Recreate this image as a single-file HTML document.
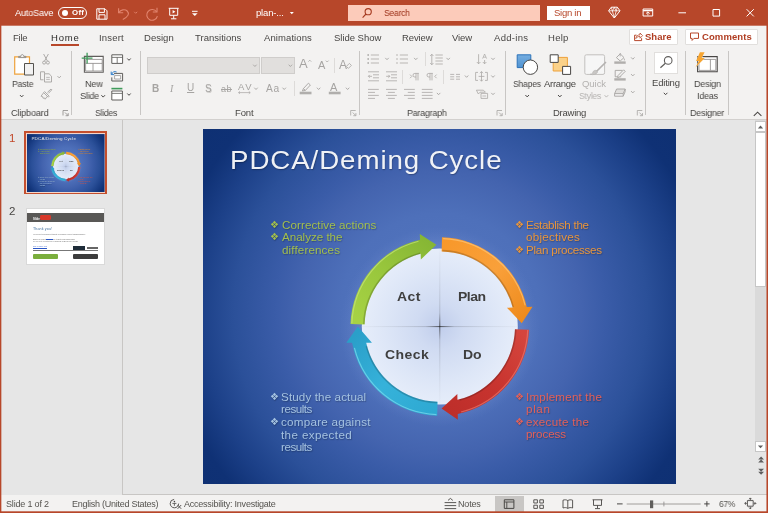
<!DOCTYPE html>
<html lang="en">
<head>
<meta charset="utf-8">
<title>plan-do-check-act - PowerPoint</title>
<style>
*{box-sizing:border-box;margin:0;padding:0}
html,body{width:768px;height:513px;overflow:hidden;background:#e6e6e6}
body{font-family:"Liberation Sans",sans-serif;font-size:9.5px;color:#484644;position:relative}
.a{position:absolute}
.t{position:absolute;white-space:nowrap;line-height:12px;will-change:transform}
.sl{text-shadow:0.6px 0.8px 1.2px rgba(0,0,0,0.28)}
#titlebar{left:0;top:0;width:768px;height:25px;background:#b7472a}
#tabs{left:0;top:25px;width:768px;height:24px;background:#f3f2f1;border-top:1px solid #c97a66}
#ribbon{left:0;top:49px;width:768px;height:71px;background:#f3f2f1;border-bottom:1px solid #d2d0ce}
#work{left:0;top:120px;width:768px;height:375px;background:#e6e6e6}
#status{left:0;top:495px;width:768px;height:18px;background:#f3f2f1}
#bl{left:0;top:25px;width:2px;height:488px;background:linear-gradient(90deg,#b7472a 0,#b7472a 1px,rgba(183,71,42,0.35) 1px,rgba(183,71,42,0.35) 2px)}
#br{left:766px;top:25px;width:2px;height:488px;background:linear-gradient(90deg,rgba(183,71,42,0.55) 0,rgba(183,71,42,0.55) 1px,#b7472a 1px,#b7472a 2px)}
#bb{left:0;top:511px;width:768px;height:2px;background:linear-gradient(180deg,rgba(183,71,42,0.7) 0,rgba(183,71,42,0.7) 1px,#b7472a 1px,#b7472a 2px)}
.sep{position:absolute;width:1px}
</style>
</head>
<body>
<div class="a" id="titlebar"></div>
<div class="a" id="tabs"></div>
<div class="a" id="ribbon"></div>
<div class="a" id="work"></div>
<div class="a" id="status"></div>

<!-- TITLEBAR -->
<span class="t" style="left:15.4px;top:7.0px;font-size:9.5px;letter-spacing:-0.25px;color:#fff;transform:scaleX(0.9737300505567069);transform-origin:0 50%;">AutoSave</span>
<div class="a" style="left:58.3px;top:6.7px;width:28.7px;height:12.2px;border:1px solid #fff;border-radius:6.1px"></div>
<div class="a" style="left:62.4px;top:10px;width:5.6px;height:5.6px;border-radius:3px;background:#fff"></div>
<span class="t" style="left:71.5px;top:6.9px;font-size:7.8px;letter-spacing:0.34px;color:#fff;font-weight:700;">Off</span>
<span class="t" style="left:256.4px;top:7.0px;font-size:9.5px;letter-spacing:-0.16px;color:#fff;">plan-...</span>
<div class="a" style="left:347.8px;top:5px;width:192.2px;height:16.3px;background:#fccbba"></div>
<span class="t" style="left:383.5px;top:7.0px;font-size:9.5px;letter-spacing:-0.25px;color:#9a2f17;transform:scaleX(0.9021817856827697);transform-origin:0 50%;">Search</span>
<div class="a" style="left:546.7px;top:6.2px;width:43px;height:13.8px;background:#fff"></div>
<span class="t" style="left:554.4px;top:7.0px;font-size:9.5px;letter-spacing:-0.27px;color:#b7472a;">Sign in</span>
<svg class="a" style="left:0;top:0" width="768" height="25" viewBox="0 0 768 25" fill="none" stroke="#fff" stroke-width="1"><path d="M96.8 8.8h8.2l2 2v8.4h-10.2z"/><path d="M99 8.8v3.6h5.4v-3.6"/><path d="M99 19.2v-4.4h6v4.4"/><g stroke="#e2856f" stroke-width="1.1"><path d="M118.6 8.2v4.6h4.6"/><path d="M118.8 12.6c2-3 6-3.8 8.4-1.6c2.6 2.6 1.2 5.6-4.4 8.4"/><path d="M134.2 11.8l1.5 1.5l1.5-1.5" stroke-width="0.9"/><path d="M157 7.8v4.2h-4.2"/><path d="M156.6 11.8a5.4 5.4 0 1 0 0.8 4.4"/></g><path d="M168.7 8.3h10M169.7 8.3v7h8v-7M173.7 15.3v3.4M171 18.8h5.4"/><path d="M172.6 10l2.8 1.8l-2.8 1.8z" fill="#fff" stroke="none"/><path d="M192 11.3h5.6"/><path d="M192 13.2l2.8 2.8l2.8-2.8z" fill="#fff" stroke="none"/><path d="M289.8 12l2 2.2l2-2.2z" fill="#fff" stroke="none"/><g stroke="#a5391f" stroke-width="1.1"><circle cx="368.2" cy="11.7" r="3.1"/><path d="M366 14l-3.4 3.6"/></g><path d="M611.3 7.2h6l2.7 3.6l-5.7 7.2l-5.7-7.2z"/><path d="M608.8 10.8h11M611.3 7.2l3 10.6l3-10.6M612.6 10.8l1.7-3.6l1.7 3.6" stroke-width="0.8"/><path d="M643.1 9h9.6v7h-9.6z"/><path d="M643.1 10.6h9.6" stroke-width="1.4"/><path d="M646 13.6l1.9-1.7l1.9 1.7M647.9 12v3.4" stroke-width="0.9"/><path d="M678.4 12.8h7.6"/><path d="M713 9.5h6.6v6.6h-6.6z"/><path d="M746.6 9.2l7.2 7.2M753.8 9.2l-7.2 7.2"/></svg>
<!-- TABS -->
<span class="t" style="left:13.1px;top:32.2px;font-size:9.5px;letter-spacing:-0.25px;color:#484644;transform:scaleX(0.9688647397282288);transform-origin:0 50%;">File</span>
<span class="t" style="left:51.1px;top:32.2px;font-size:9.5px;letter-spacing:0.80px;color:#2b2a29;">Home</span>
<span class="t" style="left:98.9px;top:32.2px;font-size:9.5px;letter-spacing:0.18px;color:#484644;">Insert</span>
<span class="t" style="left:144.1px;top:32.2px;font-size:9.5px;letter-spacing:0.03px;color:#484644;">Design</span>
<span class="t" style="left:195.2px;top:32.2px;font-size:9.5px;letter-spacing:0.02px;color:#484644;">Transitions</span>
<span class="t" style="left:263.7px;top:32.2px;font-size:9.5px;letter-spacing:0.09px;color:#484644;">Animations</span>
<span class="t" style="left:334.1px;top:32.2px;font-size:9.5px;letter-spacing:-0.03px;color:#484644;">Slide Show</span>
<span class="t" style="left:401.9px;top:32.2px;font-size:9.5px;letter-spacing:-0.10px;color:#484644;">Review</span>
<span class="t" style="left:452.4px;top:32.2px;font-size:9.5px;letter-spacing:-0.09px;color:#484644;">View</span>
<span class="t" style="left:493.7px;top:32.2px;font-size:9.5px;letter-spacing:0.30px;color:#484644;">Add-ins</span>
<span class="t" style="left:548.2px;top:32.2px;font-size:9.5px;letter-spacing:0.27px;color:#484644;">Help</span>
<div class="a" style="left:51.3px;top:44px;width:27.4px;height:2px;background:#b7472a"></div>
<div class="a" style="left:629px;top:28.7px;width:48.7px;height:16.1px;background:#fff;border:1px solid #e1dfdd;border-radius:1px"></div>
<div class="a" style="left:685px;top:28.7px;width:72.7px;height:16.1px;background:#fff;border:1px solid #e1dfdd;border-radius:1px"></div>
<span class="t" style="left:645.1px;top:30.8px;font-size:9.5px;letter-spacing:0.01px;color:#b03d22;font-weight:700;">Share</span>
<span class="t" style="left:701.8px;top:30.8px;font-size:9.5px;letter-spacing:0.09px;color:#b03d22;font-weight:700;">Comments</span>
<svg class="a" style="left:0;top:25px" width="768" height="24" viewBox="0 25 768 24" fill="none" stroke="#b7472a" stroke-width="1"><path d="M636.6 35.2h-2v5.4h7v-2.4"/><path d="M635.8 38.6c0.4-2.6 2-3.8 4.2-3.8v-1.8l2.6 2.6l-2.6 2.6v-1.8c-1.8 0-3 0.6-4.2 2.2z" stroke-width="0.8"/><path d="M690.5 33h8v5.4h-4.6l-1.8 2v-2h-1.6z"/></svg>
<!-- RIBBON -->
<div class="sep" style="left:71px;top:51.3px;height:64.2px;background:#c8c6c4"></div>
<div class="sep" style="left:140px;top:51.3px;height:64.2px;background:#c8c6c4"></div>
<div class="sep" style="left:359px;top:51.3px;height:64.2px;background:#c8c6c4"></div>
<div class="sep" style="left:505px;top:51.3px;height:64.2px;background:#c8c6c4"></div>
<div class="sep" style="left:645px;top:51.3px;height:64.2px;background:#c8c6c4"></div>
<div class="sep" style="left:685px;top:51.3px;height:64.2px;background:#c8c6c4"></div>
<div class="sep" style="left:728px;top:51.3px;height:64.2px;background:#c8c6c4"></div>
<div class="sep" style="left:334px;top:58.0px;height:14.7px;background:#dddbd9"></div>
<div class="sep" style="left:294px;top:81.3px;height:15.0px;background:#dddbd9"></div>
<div class="sep" style="left:425px;top:52.0px;height:14.3px;background:#dddbd9"></div>
<div class="sep" style="left:402px;top:69.7px;height:14.6px;background:#dddbd9"></div>
<div class="sep" style="left:443px;top:69.7px;height:14.6px;background:#dddbd9"></div>
<span class="t" style="left:11.5px;top:78.3px;font-size:9.5px;letter-spacing:-0.25px;color:#484644;transform:scaleX(0.9253894200199396);transform-origin:0 50%;">Paste</span>
<span class="t" style="left:11.1px;top:107.4px;font-size:9.5px;letter-spacing:-0.25px;color:#484644;transform:scaleX(0.9754025659283688);transform-origin:0 50%;">Clipboard</span>
<span class="t" style="left:84.5px;top:77.8px;font-size:9.5px;letter-spacing:-0.25px;color:#484644;transform:scaleX(0.9617184238183678);transform-origin:0 50%;">New</span>
<span class="t" style="left:79.5px;top:90.0px;font-size:9.5px;letter-spacing:-0.25px;color:#484644;transform:scaleX(0.9639323700045184);transform-origin:0 50%;">Slide</span>
<span class="t" style="left:95.3px;top:107.4px;font-size:9.5px;letter-spacing:-0.25px;color:#484644;transform:scaleX(0.9112302340017421);transform-origin:0 50%;">Slides</span>
<span class="t" style="left:234.9px;top:107.4px;font-size:9.5px;letter-spacing:-0.12px;color:#484644;">Font</span>
<span class="t" style="left:406.7px;top:107.4px;font-size:9.5px;letter-spacing:-0.25px;color:#484644;transform:scaleX(0.9411832483632958);transform-origin:0 50%;">Paragraph</span>
<span class="t" style="left:513.0px;top:78.3px;font-size:9.5px;letter-spacing:-0.25px;color:#484644;transform:scaleX(0.9051157898706648);transform-origin:0 50%;">Shapes</span>
<span class="t" style="left:544.2px;top:78.3px;font-size:9.5px;letter-spacing:-0.29px;color:#484644;">Arrange</span>
<span class="t" style="left:553.2px;top:107.4px;font-size:9.5px;letter-spacing:-0.25px;color:#484644;">Drawing</span>
<span class="t" style="left:582.4px;top:77.8px;font-size:9.5px;letter-spacing:-0.04px;color:#b4b2b0;">Quick</span>
<span class="t" style="left:579.2px;top:90.0px;font-size:9.5px;letter-spacing:-0.25px;color:#b4b2b0;transform:scaleX(0.9071556292294148);transform-origin:0 50%;">Styles</span>
<span class="t" style="left:651.6px;top:77.3px;font-size:9.5px;letter-spacing:-0.18px;color:#484644;">Editing</span>
<span class="t" style="left:693.9px;top:78.3px;font-size:9.5px;letter-spacing:-0.25px;color:#484644;transform:scaleX(0.9565252381253485);transform-origin:0 50%;">Design</span>
<span class="t" style="left:696.5px;top:89.7px;font-size:9.5px;letter-spacing:-0.25px;color:#484644;transform:scaleX(0.9478753706803634);transform-origin:0 50%;">Ideas</span>
<span class="t" style="left:690.2px;top:107.3px;font-size:9.5px;letter-spacing:-0.25px;color:#484644;transform:scaleX(0.9479387602738389);transform-origin:0 50%;">Designer</span>
<div class="a" style="left:147px;top:57px;width:113px;height:17px;background:#e1dfdd;border:1px solid #cfcdcb"></div>
<div class="a" style="left:261px;top:57px;width:34px;height:17px;background:#e1dfdd;border:1px solid #cfcdcb"></div>
<div class="a" style="left:654px;top:52px;width:24px;height:22px;background:#fff;border:1px solid #e1dfdd"></div>
<span class="t" style="left:152.1px;top:82.7px;font-size:10px;letter-spacing:0.00px;color:#a6a4a2;font-weight:700;">B</span>
<span class="t" style="left:170.4px;top:82.7px;font-size:10px;letter-spacing:0.00px;color:#a6a4a2;font-style:italic;font-family:'Liberation Serif',serif;">I</span>
<span class="t" style="left:186.8px;top:82.3px;font-size:10px;letter-spacing:0.00px;color:#a6a4a2;text-decoration:underline;">U</span>
<span class="t" style="left:204.9px;top:82.7px;font-size:10px;letter-spacing:0.00px;color:#a6a4a2;text-shadow:0.6px 0.6px 0 #cfcdcb;">S</span>
<span class="t" style="left:221.1px;top:83.0px;font-size:9px;letter-spacing:0.47px;color:#a6a4a2;text-decoration:line-through;">ab</span>
<span class="t" style="left:237.6px;top:81.0px;font-size:9.5px;letter-spacing:1.57px;color:#a6a4a2;">AV</span>
<span class="t" style="left:266.2px;top:82.8px;font-size:10.2px;letter-spacing:0.65px;color:#a6a4a2;">Aa</span>
<span class="t" style="left:298.9px;top:58.2px;font-size:13px;letter-spacing:0.00px;color:#a6a4a2;">A</span>
<span class="t" style="left:317.8px;top:59.0px;font-size:11px;letter-spacing:0.00px;color:#a6a4a2;">A</span>
<span class="t" style="left:339.0px;top:58.6px;font-size:12px;letter-spacing:0.00px;color:#a6a4a2;">A</span>
<span class="t" style="left:329.5px;top:80.6px;font-size:11px;letter-spacing:0.00px;color:#a6a4a2;">A</span>
<svg class="a" style="left:0;top:49px" width="768" height="71" viewBox="0 49 768 71" fill="none" stroke="#605e5c" stroke-width="1"><path d="M14.7 56.8h14.8v17.4h-14.8z" fill="#fff" stroke="#eea23c" stroke-width="1.2"/><path d="M18.6 57.6v-1.2h2.2c0-2.4 3-2.4 3 0h2.2v1.2z" fill="#f3f2f1" stroke="#8a8886" stroke-width="0.9"/><path d="M24.5 63.5h9v11.5h-9z" fill="#f2f2f2" stroke="#55534f" stroke-width="1"/><path d="M20.0 95.1l1.7 1.8l1.7 -1.8" stroke="#484644" stroke-width="1" fill="none"/><g stroke="#a6a4a2" stroke-width="0.9"><path d="M43.6 54l3.8 7M48.4 54l-3.8 7"/><circle cx="44.1" cy="62.6" r="1.5"/><circle cx="47.9" cy="62.6" r="1.5"/></g><g stroke="#a6a4a2" stroke-width="0.9"><path d="M44.5 73.8v-2h-4v8h3"/><path d="M44.5 73.8h4.6l2.4 2.4v5.8h-7z" fill="#f3f2f1"/><path d="M46.2 77.4h3.6M46.2 79.4h3.6" stroke-width="0.7"/></g><path d="M57.5 76.1l1.7 1.8l1.7 -1.8" stroke="#a6a4a2" stroke-width="0.9" fill="none"/><g stroke="#a6a4a2" stroke-width="0.9"><path d="M47.4 92.4l3.6-3.4l0.8 0.8l-3.4 3.6"/><path d="M44.6 91.6l4.6 4.6l-1 1l-4.6-4.6z"/><path d="M43.6 92.8l-2.6 3.4l1.6 0.4l0.4 1.6l1.6-0.2l0.6 1.2l2-2.8"/></g><path d="M68.0 110.5h-5.0v5" stroke="#8a8886" stroke-width="0.8" fill="none"/><path d="M65.0 112.5l3 3M68.2 113.1v2.6h-2.6" stroke="#8a8886" stroke-width="0.8" fill="none"/><path d="M84.4 56.4h18.8v15.8h-18.8z" fill="#fff" stroke="#605e5c" stroke-width="1.1"/><path d="M85.6 59.4h16.6v11.6h-16.6z" stroke="#8a8886" stroke-width="0.8"/><path d="M85.6 63.4h16.6M93 63.4v7.6" stroke="#8a8886" stroke-width="0.8"/><path d="M81.7 58.2h10.8M87.1 52.8v10.8" stroke="#3f9b5b" stroke-width="1.3"/><path d="M101.4 95.2l1.8 1.9l1.8 -1.9" stroke="#484644" stroke-width="1" fill="none"/><path d="M111.8 54.8h10.8v8.6h-10.8z" fill="#fff" stroke="#605e5c"/><path d="M112 57.4h10.4M117.2 57.4v5.8" stroke="#605e5c" stroke-width="0.8"/><path d="M127.3 58.5l1.7 1.8l1.7 -1.8" stroke="#484644" stroke-width="1" fill="none"/><path d="M114 73.4h8.6v7.6h-10.8v-3.6" fill="none" stroke="#605e5c"/><path d="M114.6 75.6h6v3.4h-6z" fill="#fff" stroke="#8a8886" stroke-width="0.7"/><path d="M111.6 74.4c0.6-2.4 3-3.4 5-2.4M111.2 71.6v3h3" stroke="#2e7cc8" stroke-width="1"/><path d="M111.4 88.6h11" stroke="#3f9b5b" stroke-width="1.6"/><path d="M111.8 91h10.6v9h-10.6z" fill="#fff" stroke="#605e5c"/><path d="M112 93.4h10.2" stroke="#605e5c" stroke-width="0.8"/><path d="M127.3 93.5l1.7 1.8l1.7 -1.8" stroke="#484644" stroke-width="1" fill="none"/><path d="M253.2 64.7l1.7 1.8l1.7 -1.8" stroke="#a6a4a2" stroke-width="0.9" fill="none"/><path d="M288.7 64.7l1.7 1.8l1.7 -1.8" stroke="#a6a4a2" stroke-width="0.9" fill="none"/><path d="M308.4 61.6l1.4-1.4l1.4 1.4" stroke="#a6a4a2" stroke-width="0.8"/><path d="M325.8 60.6l1.4 1.4l1.4-1.4" stroke="#a6a4a2" stroke-width="0.8"/><path d="M346.4 66.4l3-3l2 2l-3 3z" fill="#f3f2f1" stroke="#a6a4a2" stroke-width="0.8"/><path d="M238.6 92.6h11.6M240 91.4l-1.4 1.2l1.4 1.2M248.8 91.4l1.4 1.2l-1.4 1.2" stroke="#a6a4a2" stroke-width="0.7"/><path d="M254.3 87.7l1.7 1.8l1.7 -1.8" stroke="#a6a4a2" stroke-width="0.9" fill="none"/><path d="M282.5 87.7l1.7 1.8l1.7 -1.8" stroke="#a6a4a2" stroke-width="0.9" fill="none"/><path d="M303.4 88.6l5-5.4l2 1.8l-5 5.4z M303.4 88.6l-1 2.4l3-0.6" stroke="#a6a4a2" stroke-width="0.9"/><path d="M299.7 93h11.8" stroke="#b0aeac" stroke-width="2.6"/><path d="M316.9 87.7l1.7 1.8l1.7 -1.8" stroke="#a6a4a2" stroke-width="0.9" fill="none"/><path d="M328.8 93h11.8" stroke="#b0aeac" stroke-width="2.6"/><path d="M345.9 87.7l1.7 1.8l1.7 -1.8" stroke="#a6a4a2" stroke-width="0.9" fill="none"/><path d="M355.7 110.5h-5.0v5" stroke="#a6a4a2" stroke-width="0.8" fill="none"/><path d="M352.7 112.5l3 3M355.9 113.1v2.6h-2.6" stroke="#a6a4a2" stroke-width="0.8" fill="none"/><g stroke="#a9a7a5" stroke-width="0.8"><path d="M367.4 55h1.6" stroke-width="1.6"/><path d="M370.8 55h8.2"/><path d="M367.4 59h1.6" stroke-width="1.6"/><path d="M370.8 59h8.2"/><path d="M367.4 63h1.6" stroke-width="1.6"/><path d="M370.8 63h8.2"/><path d="M397 54v2" stroke-width="0.8"/><path d="M399.8 55h8.2"/><path d="M397 58v2" stroke-width="0.8"/><path d="M399.8 59h8.2"/><path d="M397 62v2" stroke-width="0.8"/><path d="M399.8 63h8.2"/><path d="M435.4 55h7.4"/><path d="M435.4 58h7.4"/><path d="M435.4 61h7.4"/><path d="M435.4 64h7.4"/><path d="M431.8 54.4v10.2M430.2 56l1.6-1.8l1.6 1.8M430.2 63l1.6 1.8l1.6-1.8" stroke-width="0.8"/><path d="M368 71.8h11M368 80.8h11M373 74.8h6M373 77.8h6"/><path d="M386 71.8h11M386 80.8h11M391 74.8h6M391 77.8h6"/><path d="M372 76.3h-3.6M369.8 74.9l-1.4 1.4l1.4 1.4" stroke-width="0.8"/><path d="M386.2 76.3h3.6M388.4 74.9l1.4 1.4l-1.4 1.4" stroke-width="0.8"/><path d="M410 74.6l1.8 1.8l-1.8 1.8" stroke-width="0.8"/><path d="M416 73.4v7M418 73.4v7M418.8 73.4h-4a1.8 1.8 0 0 0 0 3.6h1.2" /><path d="M436.6 74.6l-1.8 1.8l1.8 1.8" stroke-width="0.8"/><path d="M430 73.4v7M432 73.4v7M432.8 73.4h-4a1.8 1.8 0 0 0 0 3.6h1.2" /><path d="M450.2 74.4h4M456 74.4h4"/><path d="M450.2 76.8h4M456 76.8h4"/><path d="M450.2 79.2h4M456 79.2h4"/><path d="M368.0 89.4h10.8"/><path d="M368.0 92.4h7"/><path d="M368.0 95.4h10.8"/><path d="M368.0 98.4h7"/><path d="M386.0 89.4h10.8"/><path d="M387.9 92.4h7"/><path d="M386.0 95.4h10.8"/><path d="M387.9 98.4h7"/><path d="M404.0 89.4h10.8"/><path d="M407.8 92.4h7"/><path d="M404.0 95.4h10.8"/><path d="M407.8 98.4h7"/><path d="M421.8 89.4h10.8"/><path d="M421.8 92.4h10.8"/><path d="M421.8 95.4h10.8"/><path d="M421.8 98.4h10.8"/><path d="M478.6 54.2v9.6M476.8 62l1.8 1.8l1.8-1.8M484.6 60v3.8M482.8 62l1.8 1.8l1.8-1.8" stroke-width="0.8"/><path d="M482.6 58.6l2-4.6l2 4.6M483.3 57.2h2.6" stroke-width="0.7"/><path d="M478 72.4h-2.4v8h2.4M485 72.4h2.4v8h-2.4" /><path d="M481.5 71.6v9.6M480 73.2l1.5-1.6l1.5 1.6M480 79.6l1.5 1.6l1.5-1.6M478.6 76.4h5.8" stroke-width="0.8"/><path d="M476.4 90.2h7l2 2h-5.4l-1.6 1.8z" stroke-width="0.8"/><path d="M481 93.4h6.6v5h-6.6z" /><path d="M482.4 96h3.8" stroke-width="0.7"/></g><path d="M385.3 57.9l1.7 1.8l1.7 -1.8" stroke="#a6a4a2" stroke-width="0.9" fill="none"/><path d="M414.1 57.9l1.7 1.8l1.7 -1.8" stroke="#a6a4a2" stroke-width="0.9" fill="none"/><path d="M446.5 57.9l1.7 1.8l1.7 -1.8" stroke="#a6a4a2" stroke-width="0.9" fill="none"/><path d="M464.9 75.5l1.7 1.8l1.7 -1.8" stroke="#a6a4a2" stroke-width="0.9" fill="none"/><path d="M436.9 92.9l1.7 1.8l1.7 -1.8" stroke="#a6a4a2" stroke-width="0.9" fill="none"/><path d="M491.3 57.9l1.7 1.8l1.7 -1.8" stroke="#a6a4a2" stroke-width="0.9" fill="none"/><path d="M491.3 75.5l1.7 1.8l1.7 -1.8" stroke="#a6a4a2" stroke-width="0.9" fill="none"/><path d="M491.3 92.9l1.7 1.8l1.7 -1.8" stroke="#a6a4a2" stroke-width="0.9" fill="none"/><path d="M502.0 110.5h-5.0v5" stroke="#a6a4a2" stroke-width="0.8" fill="none"/><path d="M499.0 112.5l3 3M502.2 113.1v2.6h-2.6" stroke="#a6a4a2" stroke-width="0.8" fill="none"/><defs><linearGradient id="gsh" x1="0" y1="0" x2="0" y2="1"><stop offset="0" stop-color="#76aee0"/><stop offset="1" stop-color="#4f93d2"/></linearGradient></defs><path d="M517.2 54.8h13.6v12.8h-13.6z" fill="url(#gsh)" stroke="#2b72b9" stroke-width="1"/><circle cx="530.4" cy="67.2" r="7.2" fill="#fff" stroke="#484644" stroke-width="1"/><path d="M525.4 95.0l1.8 1.9l1.8 -1.9" stroke="#484644" stroke-width="1" fill="none"/><path d="M553.2 57.4h14.2v13.6h-14.2z" fill="#fbd28a" stroke="#eea23c" stroke-width="1"/><path d="M550.2 54.8h8v7.6h-8z" fill="#fff" stroke="#484644" stroke-width="1"/><path d="M562.6 66.4h8v8h-8z" fill="#fff" stroke="#484644" stroke-width="1"/><path d="M558.0 95.0l1.8 1.9l1.8 -1.9" stroke="#484644" stroke-width="1" fill="none"/><rect x="584.8" y="54.8" width="19.8" height="19.6" rx="1.6" fill="#f6f6f6" stroke="#c2c0be" stroke-width="1"/><path d="M606 62l-9.4 9.4l-2.2 0.6" stroke="#b4b2b0" stroke-width="1.6"/><path d="M596.6 70.6c-1.6-0.8-3.6 0.2-4 2.2c-0.4 1.2-1.4 1.4-2.4 1.4c3 1.2 6.4 0 7.4-2z" fill="#c8c6c4" stroke="#b4b2b0" stroke-width="0.6"/><path d="M604.6 95.2l1.8 1.9l1.8 -1.9" stroke="#b4b2b0" stroke-width="0.9" fill="none"/><g stroke="#a6a4a2" stroke-width="0.9"><path d="M616.4 57.6l3.8-3.8l3.8 3.8l-3.8 3.4z"/><path d="M620.2 53v3.4M624.4 58.6v1.8" stroke-width="0.8"/></g><path d="M614.3 62.6h11.4" stroke="#b0aeac" stroke-width="2.4"/><g stroke="#a6a4a2" stroke-width="0.9"><path d="M615.2 70.4h7.2M615.2 70.4v6.4h6"/><path d="M618 75.6l5.6-5.8l1.6 1.6l-5.6 5.6l-2 0.6z" fill="#f3f2f1"/></g><path d="M614.3 79.4h11.4" stroke="#b0aeac" stroke-width="2.4"/><g stroke="#a6a4a2" stroke-width="0.9"><path d="M616.6 89h8.6l-2 4.6h-8.6z" fill="#e1dfdd"/><path d="M614.6 93.6v2.6h8.6v-2.6M623.2 96.2l2-4.6v-2.6"/></g><path d="M631.1 57.4l1.7 1.8l1.7 -1.8" stroke="#a6a4a2" stroke-width="0.9" fill="none"/><path d="M631.1 74.1l1.7 1.8l1.7 -1.8" stroke="#a6a4a2" stroke-width="0.9" fill="none"/><path d="M631.1 91.1l1.7 1.8l1.7 -1.8" stroke="#a6a4a2" stroke-width="0.9" fill="none"/><path d="M642.3 110.5h-5.0v5" stroke="#a6a4a2" stroke-width="0.8" fill="none"/><path d="M639.3 112.5l3 3M642.5 113.1v2.6h-2.6" stroke="#a6a4a2" stroke-width="0.8" fill="none"/><circle cx="668.2" cy="60.4" r="3.8" stroke="#605e5c" stroke-width="1.1"/><path d="M665.4 63.2l-5 4.6" stroke="#605e5c" stroke-width="1.2"/><path d="M663.8 92.8l1.8 1.9l1.8 -1.9" stroke="#484644" stroke-width="1" fill="none"/><path d="M697.6 56.6h19.6v15.2h-19.6z" fill="#fff" stroke="#484644" stroke-width="1.1"/><path d="M699 59.4h16.8v11h-16.8z" stroke="#8a8886" stroke-width="0.8"/><path d="M710.4 59.4v11" stroke="#8a8886" stroke-width="0.8"/><path d="M699.9 52.3h4.7l-3 5.6h3.2l-9.4 9.6l3.6-6.6h-2.9z" fill="#f7a531" stroke="#f3f2f1" stroke-width="0.5" paint-order="stroke"/><path d="M753.8 115.8l3.8-3.6l3.8 3.6" stroke="#484644" stroke-width="1.1"/></svg>
<!-- WORK -->
<div class="a" style="left:122px;top:120px;width:1px;height:375px;background:#c8c6c4"></div>
<div class="a" style="left:122px;top:494px;width:646px;height:1px;background:#c8c6c4"></div>
<span class="t" style="left:9.2px;top:131.6px;font-size:11.5px;letter-spacing:0.00px;color:#c2492b;">1</span>
<span class="t" style="left:9.1px;top:204.8px;font-size:11.5px;letter-spacing:0.00px;color:#484644;">2</span>
<div class="a" id="th1" style="left:24.4px;top:131.1px;width:82.4px;height:63.4px;background:#c44f2e"></div>
<div class="a" style="left:26px;top:132.6px;width:79.4px;height:60.4px;background:#f3d5cb"></div>
<svg class="a" style="left:27px;top:133.5px" width="77.6" height="58.4" viewBox="203 128.5 473 355"><use href="#slideart"/></svg>
<div class="a" style="left:26px;top:207.5px;width:78.6px;height:57.6px;background:#fff;border:1px solid #d9d9d9"></div>
<div class="a" style="left:27px;top:212.8px;width:76.6px;height:9.2px;background:#595856"></div>
<div class="a" style="left:40.2px;top:215.2px;width:10.8px;height:4.6px;border-radius:1.4px;background:#d8392b"></div>
<span class="t" style="left:33.0px;top:212.6px;font-size:2.8px;letter-spacing:0.01px;color:#fff;font-weight:700;">Slide</span>
<span class="t" style="left:33.2px;top:223.2px;font-size:3.6px;letter-spacing:0.14px;color:#3e6d9c;">Thank you!</span>
<span class="t" style="left:33.3px;top:228.6px;font-size:1.3px;letter-spacing:0.08px;color:#555;">You can use this PowerPoint template for business or project planning purposes.</span>
<span class="t" style="left:33.3px;top:233.6px;font-size:1.3px;letter-spacing:0.11px;color:#555;">Browse our website for more free templates and backgrounds</span>
<span class="t" style="left:33.3px;top:235.8px;font-size:1.3px;letter-spacing:0.16px;color:#555;">for your next presentation or download premium slide designs</span>
<span class="t" style="left:33.3px;top:241.2px;font-size:1.3px;letter-spacing:0.21px;color:#2a56c6;text-decoration:underline;">www.example.com</span>
<div class="a" style="left:45.5px;top:239.2px;width:7px;height:1.2px;background:#2a56c6"></div>
<div class="a" style="left:33px;top:250.4px;width:65.4px;height:1px;background:#777"></div>
<div class="a" style="left:73.4px;top:246.4px;width:12px;height:3.2px;background:#1f2d3a"></div>
<div class="a" style="left:86.6px;top:246.8px;width:11.6px;height:2.6px;background:#666"></div>
<div class="a" style="left:33.4px;top:253.8px;width:25px;height:5.2px;border-radius:1px;background:#7aae3c"></div>
<div class="a" style="left:73.4px;top:253.8px;width:25px;height:5.2px;border-radius:1px;background:#3c3c3c"></div>
<svg class="a" id="slide" style="left:203px;top:128.5px" width="473" height="355" viewBox="203 128.5 473 355"><defs><radialGradient id="bg" gradientUnits="userSpaceOnUse" cx="440" cy="312" r="300"><stop offset="0" stop-color="#5577c2"/><stop offset="0.33" stop-color="#4e70ba"/><stop offset="0.47" stop-color="#4464af"/><stop offset="0.55" stop-color="#3a5ca8"/><stop offset="0.69" stop-color="#2b5099"/><stop offset="0.8" stop-color="#1c4088"/><stop offset="0.9" stop-color="#0f3175"/><stop offset="1" stop-color="#0e3073"/></radialGradient><radialGradient id="disc" gradientUnits="userSpaceOnUse" cx="439.8" cy="326.1" r="78"><stop offset="0" stop-color="#c0cdeb"/><stop offset="0.3" stop-color="#d0dbf2"/><stop offset="0.7" stop-color="#dde6f7"/><stop offset="1" stop-color="#e6edfa"/></radialGradient><radialGradient id="glow" gradientUnits="userSpaceOnUse" cx="439.8" cy="326.1" r="100"><stop offset="0.8" stop-color="#8aa2dc" stop-opacity="0.3"/><stop offset="1" stop-color="#6a88cc" stop-opacity="0"/></radialGradient><linearGradient id="hl" gradientUnits="userSpaceOnUse" x1="350" y1="326" x2="530" y2="326"><stop offset="0" stop-color="#333" stop-opacity="0"/><stop offset="0.25" stop-color="#333" stop-opacity="0.1"/><stop offset="0.42" stop-color="#333" stop-opacity="0.22"/><stop offset="0.5" stop-color="#222" stop-opacity="0.85"/><stop offset="0.58" stop-color="#333" stop-opacity="0.22"/><stop offset="0.75" stop-color="#333" stop-opacity="0.1"/><stop offset="1" stop-color="#333" stop-opacity="0"/></linearGradient><linearGradient id="vl" gradientUnits="userSpaceOnUse" x1="440" y1="240" x2="440" y2="412"><stop offset="0" stop-color="#333" stop-opacity="0"/><stop offset="0.25" stop-color="#333" stop-opacity="0.1"/><stop offset="0.42" stop-color="#333" stop-opacity="0.22"/><stop offset="0.5" stop-color="#222" stop-opacity="0.85"/><stop offset="0.58" stop-color="#333" stop-opacity="0.22"/><stop offset="0.75" stop-color="#333" stop-opacity="0.1"/><stop offset="1" stop-color="#333" stop-opacity="0"/></linearGradient><linearGradient id="ggr" gradientUnits="userSpaceOnUse" x1="360" y1="320" x2="430" y2="240"><stop offset="0" stop-color="#a6d244"/><stop offset="0.5" stop-color="#98c63c"/><stop offset="1" stop-color="#86b634"/></linearGradient><linearGradient id="gor" gradientUnits="userSpaceOnUse" x1="445" y1="240" x2="525" y2="320"><stop offset="0" stop-color="#f8982a"/><stop offset="0.5" stop-color="#f9a03a"/><stop offset="1" stop-color="#ee8a1c"/></linearGradient><linearGradient id="grd" gradientUnits="userSpaceOnUse" x1="525" y1="335" x2="445" y2="410"><stop offset="0" stop-color="#d5453d"/><stop offset="0.5" stop-color="#c8342f"/><stop offset="1" stop-color="#bd2e2a"/></linearGradient><linearGradient id="gbl" gradientUnits="userSpaceOnUse" x1="435" y1="410" x2="355" y2="335"><stop offset="0" stop-color="#2ea9d2"/><stop offset="0.5" stop-color="#36b2da"/><stop offset="1" stop-color="#2a9fc9"/></linearGradient><g id="slideart"><rect x="203" y="128.5" width="473" height="355" fill="url(#bg)"/><circle cx="439.8" cy="326.1" r="100" fill="url(#glow)"/><circle cx="439.8" cy="326.1" r="78" fill="url(#disc)"/><path d="M360 326.1H522" stroke="url(#hl)" stroke-width="0.9"/><path d="M439.8 246V406" stroke="url(#vl)" stroke-width="0.9"/><path d="M350.53 323.61 A89.3 89.3 0 0 1 420.02 239.15 L419.78 233.40 L436.37 244.17 L420.86 258.98 L420.62 253.23 A75.2 75.2 0 0 0 364.63 324.00 Z" fill="url(#ggr)"/><path d="M351.86 322.72A88 88 0 0 1 418.51 240.71" fill="none" stroke="#c4e27a" stroke-width="1.2" stroke-opacity="0.7"/><path d="M363.85 323.45A76 76 0 0 1 420.13 252.69" fill="none" stroke="#000" stroke-width="1.6" stroke-opacity="0.18"/><path d="M441.98 236.83 A89.3 89.3 0 0 1 526.79 306.48 L532.53 306.25 L521.73 322.81 L506.95 307.27 L512.70 307.04 A75.2 75.2 0 0 0 441.64 250.92 Z" fill="url(#gor)"/><path d="M443.18 238.16A88 88 0 0 1 525.19 304.81" fill="none" stroke="#fcc477" stroke-width="1.2" stroke-opacity="0.7"/><path d="M442.45 250.15A76 76 0 0 1 513.21 306.43" fill="none" stroke="#000" stroke-width="1.6" stroke-opacity="0.18"/><path d="M529.05 329.22 A89.3 89.3 0 0 1 457.75 413.45 L457.87 419.20 L441.52 408.08 L457.33 393.60 L457.45 399.35 A75.2 75.2 0 0 0 514.95 328.72 Z" fill="url(#grd)"/><path d="M527.74 329.48A88 88 0 0 1 461.09 411.49" fill="none" stroke="#e8766c" stroke-width="1.2" stroke-opacity="0.7"/><path d="M515.75 328.75A76 76 0 0 1 459.47 399.51" fill="none" stroke="#000" stroke-width="1.6" stroke-opacity="0.18"/><path d="M437.15 415.36 A89.3 89.3 0 0 1 352.09 342.22 L346.34 342.22 L357.80 326.10 L371.94 342.22 L366.19 342.22 A75.2 75.2 0 0 0 437.57 401.27 Z" fill="url(#gbl)"/><path d="M436.42 414.04A88 88 0 0 1 354.41 347.39" fill="none" stroke="#7fdcf0" stroke-width="1.2" stroke-opacity="0.7"/><path d="M437.15 402.05A76 76 0 0 1 366.39 345.77" fill="none" stroke="#000" stroke-width="1.6" stroke-opacity="0.18"/></g></defs><use href="#slideart"/></svg>
<div class="a" id="slidetext" style="left:0;top:0;width:0;height:0"><span class="t sl" style="left:229.9px;top:153.9px;font-size:25.2px;letter-spacing:0.82px;color:rgba(255,255,255,0.93);transform:scaleX(1.1);transform-origin:0 50%;">PDCA/Deming Cycle</span>
<span class="t sl" style="left:269.8px;top:218.9px;font-size:10px;color:#a3bf4c;font-family:'DejaVu Sans',sans-serif">❖</span>
<span class="t sl" style="left:281.5px;top:218.9px;font-size:11px;letter-spacing:0.06px;color:#a3bf4c;transform:scaleX(1.06);transform-origin:0 50%;">Corrective actions</span>
<span class="t sl" style="left:269.8px;top:231.4px;font-size:10px;color:#a3bf4c;font-family:'DejaVu Sans',sans-serif">❖</span>
<span class="t sl" style="left:281.5px;top:231.4px;font-size:11px;letter-spacing:-0.04px;color:#a3bf4c;transform:scaleX(1.06);transform-origin:0 50%;">Analyze the</span>
<span class="t sl" style="left:281.5px;top:243.9px;font-size:11px;letter-spacing:0.11px;color:#a3bf4c;transform:scaleX(1.06);transform-origin:0 50%;">differences</span>
<span class="t sl" style="left:514.6px;top:218.9px;font-size:10px;color:#e8953c;font-family:'DejaVu Sans',sans-serif">❖</span>
<span class="t sl" style="left:526.1px;top:218.9px;font-size:11px;letter-spacing:-0.29px;color:#e8953c;transform:scaleX(1.06);transform-origin:0 50%;">Establish the</span>
<span class="t sl" style="left:526.1px;top:231.4px;font-size:11px;letter-spacing:0.20px;color:#e8953c;transform:scaleX(1.06);transform-origin:0 50%;">objectives</span>
<span class="t sl" style="left:514.6px;top:243.9px;font-size:10px;color:#e8953c;font-family:'DejaVu Sans',sans-serif">❖</span>
<span class="t sl" style="left:526.1px;top:243.9px;font-size:11px;letter-spacing:-0.26px;color:#e8953c;transform:scaleX(1.06);transform-origin:0 50%;">Plan processes</span>
<span class="t sl" style="left:269.8px;top:391.1px;font-size:10px;color:#a4c2e1;font-family:'DejaVu Sans',sans-serif">❖</span>
<span class="t sl" style="left:281.3px;top:391.1px;font-size:11px;letter-spacing:0.10px;color:#a4c2e1;transform:scaleX(1.06);transform-origin:0 50%;">Study the actual</span>
<span class="t sl" style="left:281.3px;top:403.2px;font-size:11px;letter-spacing:-0.46px;color:#a4c2e1;transform:scaleX(1.06);transform-origin:0 50%;">results</span>
<span class="t sl" style="left:269.8px;top:416.1px;font-size:10px;color:#a4c2e1;font-family:'DejaVu Sans',sans-serif">❖</span>
<span class="t sl" style="left:281.3px;top:416.1px;font-size:11px;letter-spacing:0.22px;color:#a4c2e1;transform:scaleX(1.06);transform-origin:0 50%;">compare against</span>
<span class="t sl" style="left:281.3px;top:428.6px;font-size:11px;letter-spacing:0.34px;color:#a4c2e1;transform:scaleX(1.06);transform-origin:0 50%;">the expected</span>
<span class="t sl" style="left:281.3px;top:440.7px;font-size:11px;letter-spacing:-0.46px;color:#a4c2e1;transform:scaleX(1.06);transform-origin:0 50%;">results</span>
<span class="t sl" style="left:514.6px;top:391.1px;font-size:10px;color:#e2605a;font-family:'DejaVu Sans',sans-serif">❖</span>
<span class="t sl" style="left:526.3px;top:391.1px;font-size:11px;letter-spacing:0.16px;color:#e2605a;transform:scaleX(1.06);transform-origin:0 50%;">Implement the</span>
<span class="t sl" style="left:526.3px;top:403.1px;font-size:11px;letter-spacing:0.61px;color:#e2605a;transform:scaleX(1.06);transform-origin:0 50%;">plan</span>
<span class="t sl" style="left:514.6px;top:416.1px;font-size:10px;color:#e2605a;font-family:'DejaVu Sans',sans-serif">❖</span>
<span class="t sl" style="left:526.3px;top:416.1px;font-size:11px;letter-spacing:0.25px;color:#e2605a;transform:scaleX(1.06);transform-origin:0 50%;">execute the</span>
<span class="t sl" style="left:526.3px;top:428.1px;font-size:11px;letter-spacing:-0.13px;color:#e2605a;transform:scaleX(1.06);transform-origin:0 50%;">process</span>
<span class="t" style="left:396.5px;top:291.2px;font-size:12.3px;letter-spacing:0.35px;color:#3f3f3f;font-weight:700;transform:scaleX(1.14);transform-origin:0 50%;">Act</span>
<span class="t" style="left:457.7px;top:291.2px;font-size:12.3px;letter-spacing:-0.42px;color:#3f3f3f;font-weight:700;transform:scaleX(1.14);transform-origin:0 50%;">Plan</span>
<span class="t" style="left:384.8px;top:349.1px;font-size:12.3px;letter-spacing:0.39px;color:#3f3f3f;font-weight:700;transform:scaleX(1.14);transform-origin:0 50%;">Check</span>
<span class="t" style="left:462.7px;top:349.1px;font-size:12.3px;letter-spacing:-0.18px;color:#3f3f3f;font-weight:700;transform:scaleX(1.14);transform-origin:0 50%;">Do</span></div>
<div class="a" id="thumbtext" style="left:0;top:0;width:0;height:0;transform-origin:0 0;transform:translate(-6.304px,112.418px) scale(0.16406)"><span class="t sl" style="left:229.9px;top:153.9px;font-size:25.2px;letter-spacing:0.82px;color:rgba(255,255,255,0.93);transform:scaleX(1.1);transform-origin:0 50%;">PDCA/Deming Cycle</span>
<span class="t sl" style="left:269.8px;top:218.9px;font-size:10px;color:#a3bf4c;font-family:'DejaVu Sans',sans-serif">❖</span>
<span class="t sl" style="left:281.5px;top:218.9px;font-size:11px;letter-spacing:0.06px;color:#a3bf4c;transform:scaleX(1.06);transform-origin:0 50%;">Corrective actions</span>
<span class="t sl" style="left:269.8px;top:231.4px;font-size:10px;color:#a3bf4c;font-family:'DejaVu Sans',sans-serif">❖</span>
<span class="t sl" style="left:281.5px;top:231.4px;font-size:11px;letter-spacing:-0.04px;color:#a3bf4c;transform:scaleX(1.06);transform-origin:0 50%;">Analyze the</span>
<span class="t sl" style="left:281.5px;top:243.9px;font-size:11px;letter-spacing:0.11px;color:#a3bf4c;transform:scaleX(1.06);transform-origin:0 50%;">differences</span>
<span class="t sl" style="left:514.6px;top:218.9px;font-size:10px;color:#e8953c;font-family:'DejaVu Sans',sans-serif">❖</span>
<span class="t sl" style="left:526.1px;top:218.9px;font-size:11px;letter-spacing:-0.29px;color:#e8953c;transform:scaleX(1.06);transform-origin:0 50%;">Establish the</span>
<span class="t sl" style="left:526.1px;top:231.4px;font-size:11px;letter-spacing:0.20px;color:#e8953c;transform:scaleX(1.06);transform-origin:0 50%;">objectives</span>
<span class="t sl" style="left:514.6px;top:243.9px;font-size:10px;color:#e8953c;font-family:'DejaVu Sans',sans-serif">❖</span>
<span class="t sl" style="left:526.1px;top:243.9px;font-size:11px;letter-spacing:-0.26px;color:#e8953c;transform:scaleX(1.06);transform-origin:0 50%;">Plan processes</span>
<span class="t sl" style="left:269.8px;top:391.1px;font-size:10px;color:#a4c2e1;font-family:'DejaVu Sans',sans-serif">❖</span>
<span class="t sl" style="left:281.3px;top:391.1px;font-size:11px;letter-spacing:0.10px;color:#a4c2e1;transform:scaleX(1.06);transform-origin:0 50%;">Study the actual</span>
<span class="t sl" style="left:281.3px;top:403.2px;font-size:11px;letter-spacing:-0.46px;color:#a4c2e1;transform:scaleX(1.06);transform-origin:0 50%;">results</span>
<span class="t sl" style="left:269.8px;top:416.1px;font-size:10px;color:#a4c2e1;font-family:'DejaVu Sans',sans-serif">❖</span>
<span class="t sl" style="left:281.3px;top:416.1px;font-size:11px;letter-spacing:0.22px;color:#a4c2e1;transform:scaleX(1.06);transform-origin:0 50%;">compare against</span>
<span class="t sl" style="left:281.3px;top:428.6px;font-size:11px;letter-spacing:0.34px;color:#a4c2e1;transform:scaleX(1.06);transform-origin:0 50%;">the expected</span>
<span class="t sl" style="left:281.3px;top:440.7px;font-size:11px;letter-spacing:-0.46px;color:#a4c2e1;transform:scaleX(1.06);transform-origin:0 50%;">results</span>
<span class="t sl" style="left:514.6px;top:391.1px;font-size:10px;color:#e2605a;font-family:'DejaVu Sans',sans-serif">❖</span>
<span class="t sl" style="left:526.3px;top:391.1px;font-size:11px;letter-spacing:0.16px;color:#e2605a;transform:scaleX(1.06);transform-origin:0 50%;">Implement the</span>
<span class="t sl" style="left:526.3px;top:403.1px;font-size:11px;letter-spacing:0.61px;color:#e2605a;transform:scaleX(1.06);transform-origin:0 50%;">plan</span>
<span class="t sl" style="left:514.6px;top:416.1px;font-size:10px;color:#e2605a;font-family:'DejaVu Sans',sans-serif">❖</span>
<span class="t sl" style="left:526.3px;top:416.1px;font-size:11px;letter-spacing:0.25px;color:#e2605a;transform:scaleX(1.06);transform-origin:0 50%;">execute the</span>
<span class="t sl" style="left:526.3px;top:428.1px;font-size:11px;letter-spacing:-0.13px;color:#e2605a;transform:scaleX(1.06);transform-origin:0 50%;">process</span>
<span class="t" style="left:396.5px;top:291.2px;font-size:12.3px;letter-spacing:0.35px;color:#3f3f3f;font-weight:700;transform:scaleX(1.14);transform-origin:0 50%;">Act</span>
<span class="t" style="left:457.7px;top:291.2px;font-size:12.3px;letter-spacing:-0.42px;color:#3f3f3f;font-weight:700;transform:scaleX(1.14);transform-origin:0 50%;">Plan</span>
<span class="t" style="left:384.8px;top:349.1px;font-size:12.3px;letter-spacing:0.39px;color:#3f3f3f;font-weight:700;transform:scaleX(1.14);transform-origin:0 50%;">Check</span>
<span class="t" style="left:462.7px;top:349.1px;font-size:12.3px;letter-spacing:-0.18px;color:#3f3f3f;font-weight:700;transform:scaleX(1.14);transform-origin:0 50%;">Do</span></div>
<div class="a" style="left:755px;top:120px;width:11px;height:332px;background:#dadada"></div>
<div class="a" style="left:755px;top:121px;width:11px;height:11px;background:#fff;border:1px solid #c6c6c6"></div>
<div class="a" style="left:755px;top:132px;width:11px;height:155px;background:#fff;border:1px solid #c6c6c6"></div>
<div class="a" style="left:755px;top:441px;width:11px;height:11px;background:#fff;border:1px solid #c6c6c6"></div>
<svg class="a" style="left:750px;top:120px" width="18" height="375" viewBox="750 120 18 375" fill="#5e5e5e"><path d="M757.9 128.4l2.6-2.8l2.6 2.8z"/><path d="M757.9 445.4l2.6 2.8l2.6-2.8z"/><path d="M758.2 459.6l2.9-3l2.9 3zM758.2 462.6l2.9-3l2.9 3z"/><path d="M758.2 468.8l2.9 3l2.9-3zM758.2 471.8l2.9 3l2.9-3z"/></svg>
<!-- STATUS -->
<span class="t" style="left:6.3px;top:498.4px;font-size:9px;letter-spacing:-0.18px;color:#55534f;">Slide 1 of 2</span>
<span class="t" style="left:72.0px;top:498.4px;font-size:9px;letter-spacing:-0.25px;color:#55534f;">English (United States)</span>
<span class="t" style="left:183.8px;top:498.4px;font-size:9px;letter-spacing:-0.23px;color:#55534f;">Accessibility: Investigate</span>
<span class="t" style="left:457.8px;top:498.4px;font-size:9px;letter-spacing:-0.18px;color:#55534f;">Notes</span>
<span class="t" style="left:719.4px;top:498.2px;font-size:9px;letter-spacing:-0.25px;color:#55534f;transform:scaleX(0.9310409745504098);transform-origin:0 50%;">67%</span>
<div class="a" style="left:494.5px;top:496px;width:29.3px;height:16px;background:#c8c6c4"></div>
<svg class="a" style="left:0;top:495px" width="768" height="18" viewBox="0 495 768 18" fill="none" stroke="#484644" stroke-width="1"><circle cx="174.4" cy="503.6" r="4.2" stroke-width="0.9" stroke-dasharray="19 7"/><circle cx="174.4" cy="501.6" r="0.8" fill="#484644" stroke="none"/><path d="M172.4 503.4h4M174.4 503.4v2.4" stroke-width="0.8"/><path d="M177.6 505l3.6 3.8M181.2 505l-3.6 3.8" stroke-width="0.9"/><path d="M444.6 502.6h11.6M444.6 505.6h11.6M444.6 508.6h11.6" stroke-width="0.9"/><path d="M448 500.4l2.4-2l2.4 2" stroke-width="0.9"/><path d="M504.3 499.8h9.6v8.6h-9.6z"/><path d="M504.3 502h9.6M506.8 502v6.4" stroke-width="0.9"/><path d="M533.8 499.8h3.6v3.2h-3.6z" stroke-width="0.9"/><path d="M533.8 505.2h3.6v3.2h-3.6z" stroke-width="0.9"/><path d="M539.8 499.8h3.6v3.2h-3.6z" stroke-width="0.9"/><path d="M539.8 505.2h3.6v3.2h-3.6z" stroke-width="0.9"/><path d="M563 500.2c1.6-0.6 3.4-0.6 4.8 0.4c1.4-1 3.2-1 4.8-0.4v7.8c-1.6-0.6-3.4-0.6-4.8 0.4c-1.4-1-3.2-1-4.8-0.4zM567.8 500.6v7.8" stroke-width="0.9"/><path d="M592.5 499.8h10M593.5 499.8v5.6h8v-5.6M597.5 505.4v3M595 508.6h5" stroke-width="0.9"/><path d="M617 503.9h5.6" /><path d="M626.7 504h74" stroke="#8a8886" stroke-width="0.8"/><path d="M663.9 501.6v4.8" stroke="#8a8886" stroke-width="0.8"/><path d="M650 500.4h3.2v7.8h-3.2z" fill="#605e5c" stroke="none"/><path d="M704.2 503.9h5.4M706.9 501.2v5.4"/><path d="M747.4 500.6h5.8v5.6h-5.8z" stroke-width="0.9"/><path d="M750.3 498v2M750.3 506.8v2M744.8 503.4h2M753.8 503.4h2" stroke-width="0.9"/><path d="M749 499.2l1.3-1.3l1.3 1.3M749 507.6l1.3 1.3l1.3-1.3M746 502.1l-1.3 1.3l1.3 1.3M754.6 502.1l1.3 1.3l-1.3 1.3" stroke-width="0.8"/></svg>
<div class="a" id="bl"></div><div class="a" id="br"></div><div class="a" id="bb"></div>
</body>
</html>
